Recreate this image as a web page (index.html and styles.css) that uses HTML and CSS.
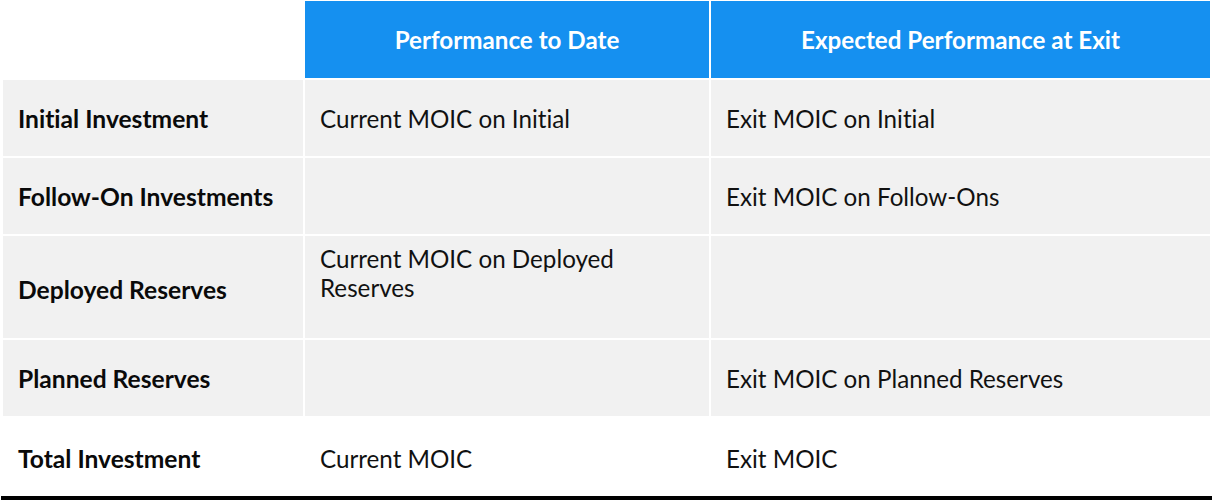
FILE: index.html
```html
<!DOCTYPE html>
<html>
<head>
<meta charset="utf-8">
<link rel="stylesheet" href="styles.css">
</head>
<body>
<table class="moic">
  <colgroup>
    <col class="c1"><col class="c2"><col class="c3">
  </colgroup>
  <thead>
    <tr class="head">
      <th class="blank"></th>
      <th class="hd">Performance to Date</th>
      <th class="hd">Expected Performance at Exit</th>
    </tr>
  </thead>
  <tbody>
    <tr class="row">
      <th class="label">Initial Investment</th>
      <td>Current MOIC on Initial</td>
      <td>Exit MOIC on Initial</td>
    </tr>
    <tr class="row">
      <th class="label">Follow-On Investments</th>
      <td></td>
      <td>Exit MOIC on Follow-Ons</td>
    </tr>
    <tr class="row tall">
      <th class="label">Deployed Reserves</th>
      <td class="top">Current MOIC on Deployed Reserves</td>
      <td></td>
    </tr>
    <tr class="row">
      <th class="label">Planned Reserves</th>
      <td></td>
      <td>Exit MOIC on Planned Reserves</td>
    </tr>
    <tr class="row total">
      <th class="label">Total Investment</th>
      <td>Current MOIC</td>
      <td>Exit MOIC</td>
    </tr>
  </tbody>
</table>
</body>
</html>
```

FILE: styles.css
```css
html, body {
  margin: 0;
  padding: 0;
  background: #ffffff;
}

body {
  font-family: Lato, "Open Sans", "Liberation Sans", sans-serif;
  color: #111111;
  font-variant-ligatures: no-common-ligatures;
}

.moic {
  border-collapse: separate;
  border-spacing: 2px;
  margin: -1px 0 0 1px;
  table-layout: fixed;
  width: 1211px;
  font-size: 24.2px;
  line-height: 29px;
  border-bottom: 4px solid #000000;
}

.c1 { width: 300px; }
.c2 { width: 404px; }
.c3 { width: 499px; }

.head th {
  height: 77px;
  padding: 0;
  box-sizing: border-box;
}

.hd {
  background: #1590f0;
  color: #ffffff;
  font-weight: 700;
  text-align: center;
  vertical-align: middle;
}

.blank {
  background: transparent;
}

.row th,
.row td {
  box-sizing: border-box;
  background: #f1f1f1;
  height: 76px;
  padding: 0 15px;
  text-align: left;
  vertical-align: middle;
  font-weight: 400;
}

.row th.label {
  font-weight: 700;
  font-size: 24.6px;
  color: #0a0a0a;
}

.row.tall th,
.row.tall td {
  height: 102px;
}

.row.tall th.label {
  padding-top: 4px;
}

.row.tall td.top {
  vertical-align: top;
  padding-top: 8px;
  padding-right: 24px;
}

.row.total th,
.row.total td {
  background: #ffffff;
  height: 76px;
  padding-top: 4px;
}
```
